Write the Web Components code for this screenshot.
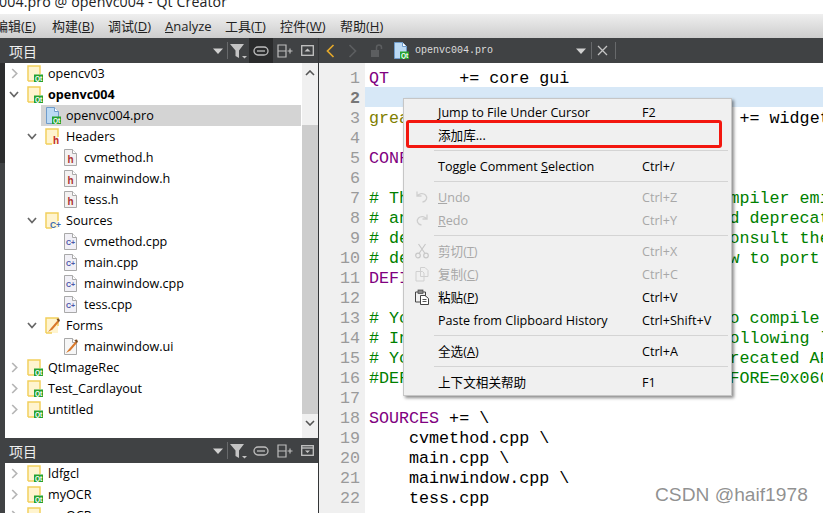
<!DOCTYPE html>
<html>
<head>
<meta charset="utf-8">
<title>Qt Creator</title>
<style>
  html, body { margin: 0; height: 513px; overflow: hidden; background: #fff; }
  body { font-family: "Open Sans", "Noto Sans CJK SC", sans-serif; font-size: 13px; }
</style>
</head>
<body>
<qt-window>
  <title-bar slot="title">004.pro @ openvc004 - Qt Creator</title-bar>
  <menu-bar slot="menu">
    <menu-title w="57" ml="-5">编辑(<u>E</u>)</menu-title>
    <menu-title w="56">构建(<u>B</u>)</menu-title>
    <menu-title w="57">调试(<u>D</u>)</menu-title>
    <menu-title w="60"><u>A</u>nalyze</menu-title>
    <menu-title w="55">工具(<u>T</u>)</menu-title>
    <menu-title w="60">控件(<u>W</u>)</menu-title>
    <menu-title w="50">帮助(<u>H</u>)</menu-title>
  </menu-bar>

  <project-panel slot="side" label="项目" active style="height:400px">
    <tree-row twisty="closed" icon="qtfolder">opencv03</tree-row>
    <tree-row twisty="open" icon="qtfolder" bold>openvc004</tree-row>
    <tree-row depth="1" icon="pro" selected>openvc004.pro</tree-row>
    <tree-row depth="1" twisty="open" icon="hfolder">Headers</tree-row>
    <tree-row depth="2" icon="h">cvmethod.h</tree-row>
    <tree-row depth="2" icon="h">mainwindow.h</tree-row>
    <tree-row depth="2" icon="h">tess.h</tree-row>
    <tree-row depth="1" twisty="open" icon="cppfolder">Sources</tree-row>
    <tree-row depth="2" icon="cpp">cvmethod.cpp</tree-row>
    <tree-row depth="2" icon="cpp">main.cpp</tree-row>
    <tree-row depth="2" icon="cpp">mainwindow.cpp</tree-row>
    <tree-row depth="2" icon="cpp">tess.cpp</tree-row>
    <tree-row depth="1" twisty="open" icon="uifolder">Forms</tree-row>
    <tree-row depth="2" icon="ui">mainwindow.ui</tree-row>
    <tree-row twisty="closed" icon="qtfolder">QtImageRec</tree-row>
    <tree-row twisty="closed" icon="qtfolder">Test_Cardlayout</tree-row>
    <tree-row twisty="closed" icon="qtfolder">untitled</tree-row>
  </project-panel>
  <project-panel slot="side" label="项目" lower style="flex:1">
    <tree-row twisty="closed" icon="qtfolder">ldfgcl</tree-row>
    <tree-row twisty="closed" icon="qtfolder">myOCR</tree-row>
    <tree-row twisty="closed" icon="qtfolder">myOCR</tree-row>
  </project-panel>

  <editor-pane slot="editor" file="openvc004.pro">
    <code-line n="1"><c-t k="kw">QT</c-t>       += core gui</code-line>
    <code-line n="2" current></code-line>
    <code-line n="3"><c-t k="fn">greaterThan</c-t>(QT_MAJOR_VERSION, 4): <c-t k="kw">QT</c-t> += widgets</code-line>
    <code-line n="4"></code-line>
    <code-line n="5"><c-t k="kw">CONFIG</c-t> += c++11</code-line>
    <code-line n="6"></code-line>
    <code-line n="7"><c-t k="cm"># The following define makes your compiler emit warnings if you use</c-t></code-line>
    <code-line n="8"><c-t k="cm"># any Qt feature that has been marked deprecated (the exact warnings</c-t></code-line>
    <code-line n="9"><c-t k="cm"># depend on your compiler). Please consult the documentation of the</c-t></code-line>
    <code-line n="10"><c-t k="cm"># deprecated API in order to know how to port your code away from it.</c-t></code-line>
    <code-line n="11"><c-t k="kw">DEFINES</c-t> += QT_DEPRECATED_WARNINGS</code-line>
    <code-line n="12"></code-line>
    <code-line n="13"><c-t k="cm"># You can also make your code fail to compile if you use deprecated APIs.</c-t></code-line>
    <code-line n="14"><c-t k="cm"># In order to do so, uncomment the following line.</c-t></code-line>
    <code-line n="15"><c-t k="cm"># You can also select to disable deprecated APIs only up to a certain version of Qt.</c-t></code-line>
    <code-line n="16"><c-t k="cm">#DEFINES += QT_DISABLE_DEPRECATED_BEFORE=0x060000</c-t></code-line>
    <code-line n="17"></code-line>
    <code-line n="18"><c-t k="kw">SOURCES</c-t> += \</code-line>
    <code-line n="19">    cvmethod.cpp \</code-line>
    <code-line n="20">    main.cpp \</code-line>
    <code-line n="21">    mainwindow.cpp \</code-line>
    <code-line n="22">    tess.cpp</code-line>
  </editor-pane>

  <context-menu slot="overlay">
    <menu-entry latin shortcut="F2">Jump to File Under Cursor</menu-entry>
    <menu-entry>添加库...</menu-entry>
    <menu-sep></menu-sep>
    <menu-entry latin shortcut="Ctrl+/">Toggle Comment <u>S</u>election</menu-entry>
    <menu-sep></menu-sep>
    <menu-entry latin icon="undo" shortcut="Ctrl+Z" disabled><u>U</u>ndo</menu-entry>
    <menu-entry latin icon="redo" shortcut="Ctrl+Y" disabled><u>R</u>edo</menu-entry>
    <menu-sep></menu-sep>
    <menu-entry icon="cut" shortcut="Ctrl+X" disabled>剪切(<u>T</u>)</menu-entry>
    <menu-entry icon="copy" shortcut="Ctrl+C" disabled>复制(<u>C</u>)</menu-entry>
    <menu-entry icon="paste" shortcut="Ctrl+V">粘贴(<u>P</u>)</menu-entry>
    <menu-entry latin shortcut="Ctrl+Shift+V">Paste from Clipboard History</menu-entry>
    <menu-sep></menu-sep>
    <menu-entry shortcut="Ctrl+A">全选(<u>A</u>)</menu-entry>
    <menu-sep></menu-sep>
    <menu-entry shortcut="F1">上下文相关帮助</menu-entry>
  </context-menu>
  <red-mark slot="overlay"></red-mark>
  <water-mark slot="overlay">CSDN @haif1978</water-mark>
</qt-window>

<script>
// small helper so every element below stays one short class
function define(name, css, html, setup) {
  customElements.define(name, class extends HTMLElement {
    constructor() {
      super();
      this.attachShadow({ mode: "open" });
      this.shadowRoot.innerHTML = `<style>${css}</style>${typeof html === "function" ? html(this) : html}`;
      if (setup) setup(this);
    }
  });
}

const badge = (bg, label, color = "#fff") =>
  `<rect x="7" y="9.5" width="9" height="7.5" fill="${bg}"/><text x="11.5" y="15.6" font-size="6.5" font-weight="700" font-family="Liberation Sans" text-anchor="middle" fill="${color}">${label}</text>`;
const folder = `<path d="M1.5 1V16H13V1Z" fill="#fff4cf"/><path d="M1 16V1H13V9M1 16H7" fill="none" stroke="#f2cf5c" stroke-width="1.5"/>`;
const page = (fill, edge) => `<path d="M1.5 .5H9.5L13.5 4.5V16.5H1.5Z" fill="${fill}" stroke="${edge}"/><path d="M9.5 .5V4.5H13.5" fill="#fff" stroke="${edge}"/>`;
const pen = `<path d="M3 15 L6 11 L12.5 3.5 L14 5 L7.5 12.5Z" fill="#d9792b"/><path d="M11.5 2 L14 1.5 L15 4 L13.5 5Z" fill="#7a4a20"/>`;
const fileIcons = {
  qtfolder: folder + badge("#27a22f", "Qt"),
  hfolder: folder + `<text x="11" y="16" font-size="10" font-weight="700" font-family="Liberation Sans" text-anchor="middle" fill="#c32a2a">h</text>`,
  cppfolder: folder + `<text x="10.5" y="16" font-size="8.5" font-weight="700" font-family="Liberation Sans" text-anchor="middle" fill="#3d6db0">C+</text>`,
  uifolder: folder + pen,
  pro: page("#bcdaf4", "#6f9ccb") + badge("#27a22f", "Qt"),
  h: page("#f3f1f1", "#a9a9a9") + `<text x="7.5" y="13.5" font-size="10" font-weight="700" font-family="Liberation Sans" text-anchor="middle" fill="#ad3333">h</text>`,
  cpp: page("#f1f0f6", "#a9a9a9") + `<text x="7.5" y="11.5" font-size="7" font-weight="700" font-family="Liberation Sans" text-anchor="middle" fill="#4a55a8">C+</text>`,
  ui: page("#f6f6f6", "#a9a9a9") + pen,
};
const fileSvg = (name, size = 17) => `<svg width="${size}" height="${size}" viewBox="0 0 17 17">${fileIcons[name]}</svg>`;

const toolIcons = {
  arrow: `<svg width="12" height="8" viewBox="0 0 12 8"><path d="M1 1.5H11L6 7Z" fill="#d0d0d0"/></svg>`,
  filter: `<svg width="20" height="18" viewBox="0 0 20 18"><path d="M1 2H15L10 8.5V16L6.5 14V8.5Z" fill="#c4c4c4"/><path d="M13 14H18L15.5 16.5Z" fill="#c4c4c4"/></svg>`,
  link: `<svg width="16" height="12" viewBox="0 0 16 12"><rect x="1" y="2" width="14" height="8" rx="4" fill="none" stroke="#bdbdbd" stroke-width="1.3"/><path d="M4 6H12" stroke="#bdbdbd" stroke-width="1.3"/></svg>`,
  split: `<svg width="16" height="14" viewBox="0 0 16 14"><path d="M1 1H9V13H1ZM1 7H9" fill="none" stroke="#bdbdbd" stroke-width="1.2"/><path d="M10.5 7H15.5M13 4.5V9.5" stroke="#bdbdbd" stroke-width="1.2"/></svg>`,
  float: `<svg width="13" height="11" viewBox="0 0 13 11"><rect x=".7" y=".7" width="11.6" height="9.6" fill="none" stroke="#c4c4c4" stroke-width="1.3"/><path d="M3.5 6.5H9.5L6.5 3.5Z" fill="#c4c4c4"/></svg>`,
  drop: `<svg width="13" height="11" viewBox="0 0 13 11"><rect x=".7" y=".7" width="11.6" height="9.6" fill="none" stroke="#c4c4c4" stroke-width="1.3"/><path d="M1 3H12" stroke="#c4c4c4" stroke-width="1.3"/><path d="M4 5.5H9L6.5 8Z" fill="#c4c4c4"/></svg>`,
  back: `<svg width="9" height="14" viewBox="0 0 9 14"><path d="M7.5 1L1.5 7L7.5 13" fill="none" stroke="#e3a82b" stroke-width="1.7"/></svg>`,
  fwd: `<svg width="9" height="14" viewBox="0 0 9 14"><path d="M1.5 1L7.5 7L1.5 13" fill="none" stroke="#5c5e60" stroke-width="1.7"/></svg>`,
  lock: `<svg width="14" height="13" viewBox="0 0 14 13"><rect x="1" y="6" width="8" height="7" fill="#5c5e60"/><path d="M6.5 6V3.5A2.5 2.5 0 0 1 11.5 3.5V5" fill="none" stroke="#5c5e60" stroke-width="1.5"/></svg>`,
  close: `<svg width="11" height="11" viewBox="0 0 11 11"><path d="M1 1L10 10M10 1L1 10" stroke="#c4c4c4" stroke-width="1.3"/></svg>`,
};

const menuIcons = {
  undo: `<path d="M3 2.5V7H7.5M3.2 7C5 4.5 9 3.5 11.5 6C14 8.5 12.5 12.5 8.5 13" fill="none" stroke="#cfcfcf" stroke-width="1.3"/>`,
  redo: `<path d="M13 2.5V7H8.5M12.8 7C11 4.5 7 3.5 4.5 6C2 8.5 3.5 12.5 7.5 13" fill="none" stroke="#cfcfcf" stroke-width="1.3"/>`,
  cut: `<circle cx="4" cy="12.5" r="2.3" fill="none" stroke="#c8c8c8" stroke-width="1.2"/><circle cx="12" cy="12.5" r="2.3" fill="none" stroke="#c8c8c8" stroke-width="1.2"/><path d="M5 10.5L11.5 1M11 10.5L4.5 1" stroke="#c8c8c8" stroke-width="1.2"/>`,
  copy: `<path d="M6.5 1.5H11L14 4.5V10.5H6.5Z M2 5.5H8.5L10 7V15H2Z" fill="#f0f0f0" stroke="#d0d0d0"/>`,
  paste: `<path d="M1.5 3H11.5V13H1.5Z" fill="#f0f0f0" stroke="#444"/><rect x="4" y="1" width="5" height="3.5" fill="#888" stroke="#444" stroke-width=".7"/><path d="M6.5 6.5H11L14.5 9.5V15.5H6.5Z" fill="#fff" stroke="#444"/><path d="M8.5 10.5H12.5M8.5 12.5H12.5" stroke="#555"/>`,
};

define("qt-window", `
  :host { display: flex; flex-direction: column; position: relative; width: 823px; height: 513px; overflow: hidden; }
  .work { flex: 1; min-height: 0; display: flex; }
  .strip { width: 5px; flex: none; background: linear-gradient(#404244 25px, #2c2d2e 25px, #2c2d2e 125px, #404244 125px); }
  .side { width: 313px; flex: none; display: flex; flex-direction: column; }
  .split { width: 1px; flex: none; background: #333537; }
  .edit { flex: 1; min-width: 0; display: flex; }
`, `
  <slot name="title"></slot><slot name="menu"></slot>
  <div class="work">
    <div class="strip"></div>
    <div class="side"><slot name="side"></slot></div>
    <div class="split"></div>
    <div class="edit"><slot name="editor"></slot></div>
  </div>
  <slot name="overlay"></slot>
`);

define("title-bar", `
  :host { display: block; height: 14px; background: #fff; overflow: hidden; color: #222; font-size: 14.2px; white-space: nowrap; }
  div { margin: -8px 0 0 -1px; line-height: 20px; letter-spacing: .1px; }
`, `<div><slot></slot></div>`);

define("menu-bar", `
  :host { display: flex; align-items: center; height: 24px; overflow: hidden; white-space: nowrap;
    background: linear-gradient(#efefef, #cdcdcd); color: #222; font-size: 13px; }
`, `<slot></slot>`);

define("menu-title", `:host { display: block; flex: none; line-height: 24px; }`, `<slot></slot>`, el => {
  el.style.width = el.getAttribute("w") + "px";
  if (el.hasAttribute("ml")) el.style.marginLeft = el.getAttribute("ml") + "px";
});

define("dock-button", `
  :host { display: flex; align-items: center; justify-content: center; flex: none; height: 25px; }
`, `<slot></slot>`, el => {
  el.style.width = (el.getAttribute("w") || 23) + "px";
  if (el.hasAttribute("on")) el.style.background = "#2a2b2c";
});

define("project-panel", `
  :host { display: flex; flex-direction: column; min-height: 0; overflow: hidden; background: #fff; }
  .bar { display: flex; align-items: center; height: 25px; flex: none; background: #404244; color: #eee; }
  .label { flex: 1; padding-left: 4px; font-size: 14px; font-family: "Noto Sans CJK SC", sans-serif; }
  .sep { width: 1px; height: 17px; background: #67696b; margin: 0 0 0 3px; }
  .body { flex: 1; min-height: 0; display: flex; }
  .rows { flex: 1; min-width: 0; overflow: hidden; }
  .bar svg { display: block; }
  .scroll { width: 16px; flex: none; background: #f0f0f0; display: flex; flex-direction: column; align-items: center; }
  .scroll svg { display: block; margin: 7px 0; flex: none; }
  .thumb { width: 100%; background: #cdcdcd; margin: 0 1px 0 0; box-sizing: border-box; }
`, el => `
  <div class="bar">
    <div class="label">${el.getAttribute("label")}</div>
    ${toolIcons.arrow}<div class="sep"></div>
    <dock-button w="21">${toolIcons.filter}</dock-button>
    <dock-button w="24" ${el.hasAttribute("active") ? "on" : ""}>${toolIcons.link}</dock-button>
    <dock-button w="23">${toolIcons.split}</dock-button>
    <dock-button w="22">${el.hasAttribute("lower") ? toolIcons.drop : toolIcons.float}</dock-button>
  </div>
  <div class="body">
    <div class="rows"><slot></slot></div>
    ${el.hasAttribute("active") ? `<div class="scroll">
      <svg width="10" height="6" viewBox="0 0 10 6"><path d="M1 5L5 1L9 5" fill="none" stroke="#555" stroke-width="1.6"/></svg>
      <div class="thumb" style="height:289px;margin-top:42px"></div>
      <svg width="10" height="6" viewBox="0 0 10 6" style="margin-top:6px"><path d="M1 1L5 5L9 1" fill="none" stroke="#555" stroke-width="1.6"/></svg>
    </div>` : ""}
  </div>
`);

define("tree-row", `
  :host { display: flex; height: 21px; color: #000; font-size: 12.6px; white-space: nowrap; }
  .tw { width: 18px; flex: none; display: flex; align-items: center; justify-content: center; }
  .main { flex: 1; min-width: 0; display: flex; align-items: center; margin-right: 1px; }
  :host([selected]) .main { background: #d4d4d4; }
  .ic { width: 25px; flex: none; padding-left: 4px; box-sizing: border-box; display: flex; align-items: center; }
  .txt { margin-top: -1px; }
  :host([bold]) { font-weight: 700; }
  svg { display: block; }
`, el => {
  const depth = +(el.getAttribute("depth") || 0);
  const tw = el.getAttribute("twisty");
  const chevron = tw === "open"
    ? `<svg width="10" height="7" viewBox="0 0 10 7"><path d="M1 1L5 5.5L9 1" fill="none" stroke="#666" stroke-width="1.7"/></svg>`
    : tw === "closed"
    ? `<svg width="7" height="11" viewBox="0 0 7 11"><path d="M1.2 1L5.7 5.5L1.2 10" fill="none" stroke="#b5b5b5" stroke-width="1.7"/></svg>`
    : "";
  return `<div style="width:${depth * 18}px;flex:none"></div><div class="tw">${chevron}</div>
    <div class="main"><div class="ic">${fileSvg(el.getAttribute("icon"))}</div><div class="txt"><slot></slot></div></div>`;
});

define("editor-pane", `
  :host { display: flex; flex-direction: column; flex: 1; min-width: 0; background: #fff; }
  .bar { height: 25px; flex: none; display: flex; align-items: center; background: #404244; color: #ddd; }
  .bar svg { display: block; flex: none; }
  .name { flex: 1; font: 10px "Liberation Mono", monospace; padding-left: 5px; white-space: pre; }
  .sep { width: 1px; height: 17px; background: #67696b; flex: none; }
  .code { flex: 1; min-height: 0; overflow: hidden; padding-top: 4px;
    background: linear-gradient(90deg, #f0f0f0 46px, #fff 46px); }
`, el => `
  <div class="bar">
    <div style="width:7px"></div>${toolIcons.back}
    <div style="width:13px"></div>${toolIcons.fwd}
    <div style="width:13px"></div>${toolIcons.lock}
    <div style="width:9px"></div>${fileSvg("pro")}
    <div class="name">${el.getAttribute("file")}</div>
    ${toolIcons.arrow}<div style="width:4px"></div><div class="sep"></div>
    <div style="width:5px"></div>${toolIcons.close}<div style="width:7px"></div><div class="sep"></div>
    <div style="width:207px"></div>
  </div>
  <div class="code"><slot></slot></div>
`);

define("code-line", `
  :host { display: flex; height: 20px; font: 16.7px/23px "Liberation Mono", monospace; white-space: pre; color: #000; }
  .num { width: 41px; padding-right: 5px; flex: none; text-align: right; color: #9a9a9a; }
  .txt { flex: 1; padding-left: 4px; min-width: 0; }
  :host([current]) .txt { background: #d7e8f7; }
  :host([current]) .num { color: #777; font-weight: 700; }
`, el => `<div class="num">${el.getAttribute("n")}</div><div class="txt"><slot></slot></div>`);

define("c-t", `
  :host { display: inline; }
  :host([k="kw"]) { color: #800080; }
  :host([k="fn"]) { color: #808000; }
  :host([k="cm"]) { color: #008000; }
`, `<slot></slot>`);

// the popup and the marks lie over the editor
define("context-menu", `
  :host { display: block; position: absolute; left: 403px; top: 98px; width: 329px; height: 298px; box-sizing: border-box;
    padding-top: 1px; background: #f0f0f0; border: 1px solid #c6c6c6; box-shadow: 2px 2px 3px rgba(0,0,0,.45); color: #000; }
`, `<slot></slot>`);

define("menu-entry", `
  :host { display: flex; align-items: center; height: 23px; font-size: 12.6px; white-space: nowrap; }
  :host([disabled]) { color: #a8a8a8; }
  .ic { width: 34px; flex: none; display: flex; align-items: center; justify-content: center; padding-left: 1px; box-sizing: border-box; }
  .ic svg { display: block; }
  .label { width: 204px; flex: none; }
  :host([latin]) .label { padding-top: 2px; }
  .keys { padding-top: 2px; }
`, el => {
  const ic = el.getAttribute("icon");
  return `<div class="ic">${ic ? `<svg width="16" height="16" viewBox="0 0 16 16">${menuIcons[ic]}</svg>` : ""}</div>
    <div class="label"><slot></slot></div><div class="keys">${el.getAttribute("shortcut") || ""}</div>`;
});

define("menu-sep", `
  :host { display: flex; align-items: center; height: 8px; padding: 0 3px 0 30px; }
  div { flex: 1; height: 1px; background: #d4d4d4; }
`, `<div></div>`);

define("red-mark", `
  :host { display: block; position: absolute; left: 406px; top: 120px; width: 316px; height: 27.5px; box-sizing: border-box;
    border: 3px solid #f3170f; border-radius: 3px; }
`, ``);

define("water-mark", `
  :host { display: block; position: absolute; left: 655px; top: 484px; font: 19.2px "Liberation Sans", sans-serif;
    color: rgba(125,125,125,.85); text-shadow: 0 0 2px #fff; white-space: nowrap; }
`, `<slot></slot>`);
</script>
</body>
</html>
